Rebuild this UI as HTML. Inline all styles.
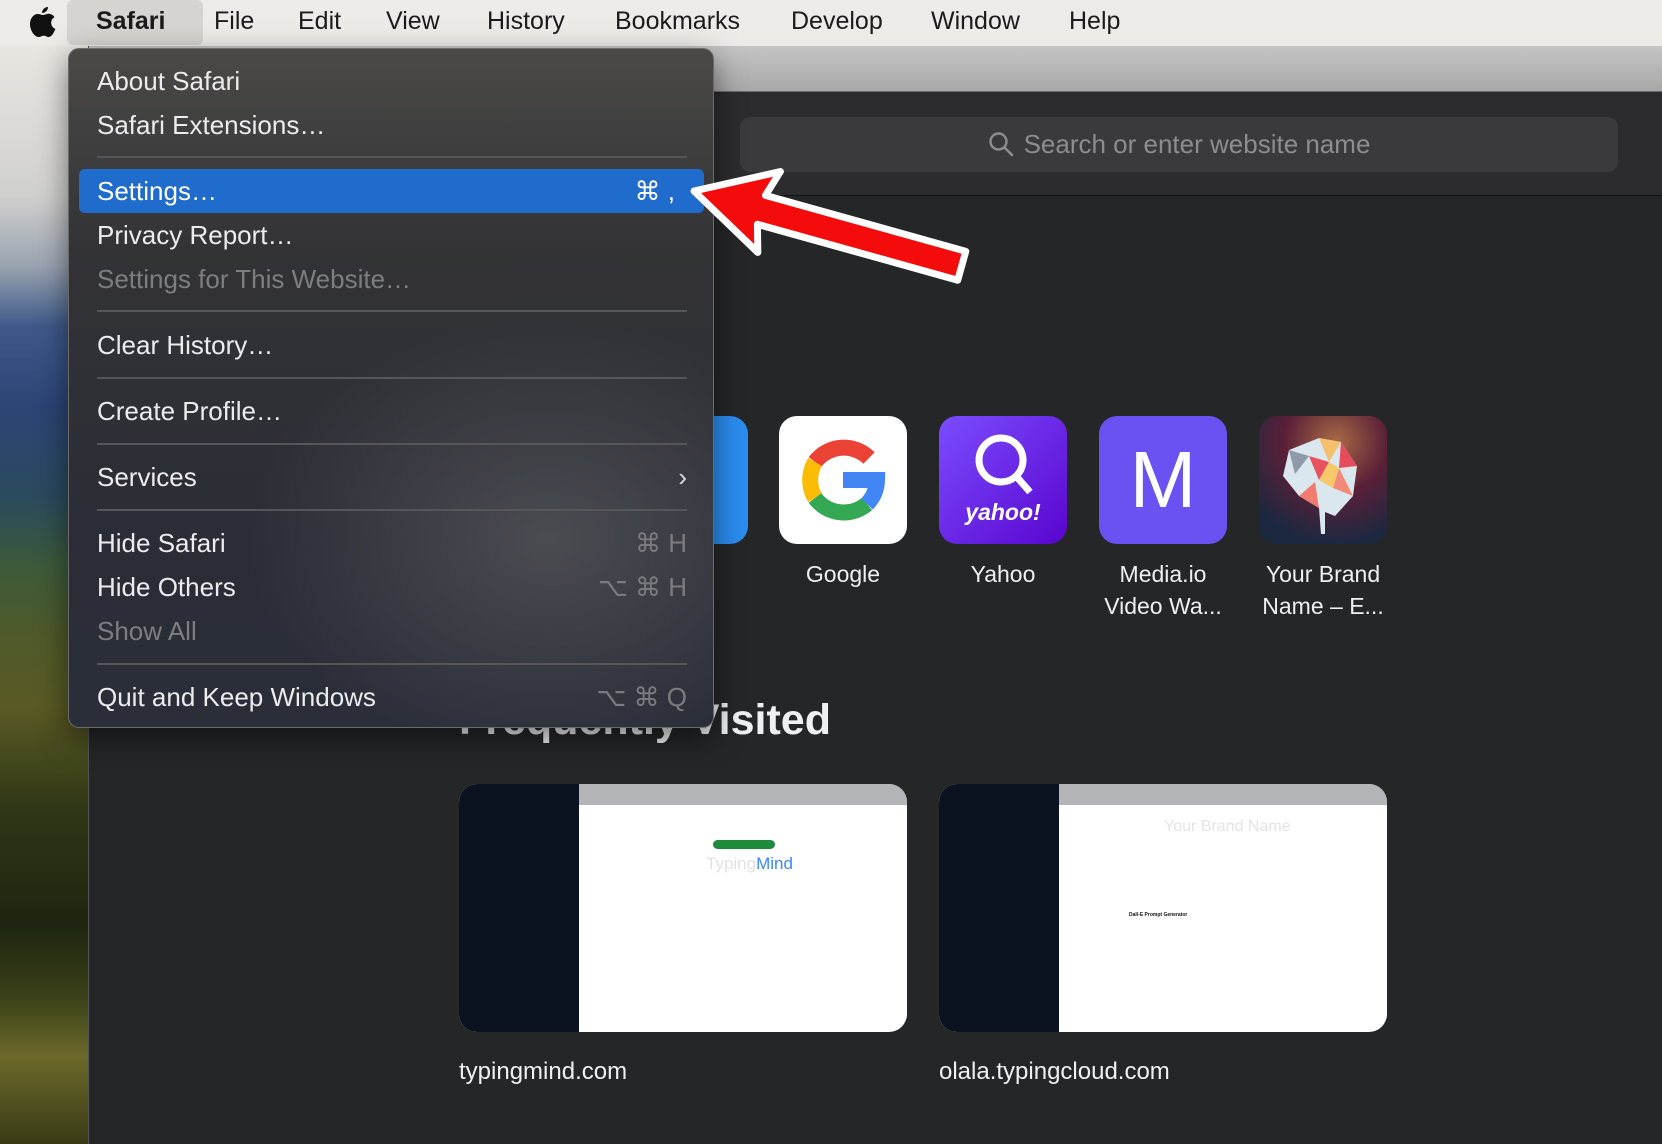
<!DOCTYPE html>
<html><head><meta charset="utf-8">
<style>
*{margin:0;padding:0;box-sizing:border-box}
body{width:1662px;height:1144px;overflow:hidden;position:relative;font-family:"Liberation Sans",sans-serif;background:#252628}
.desk{position:absolute;left:0;top:46px;width:90px;height:1098px;background:linear-gradient(180deg,#e8e6e0 0,#d0d0ce 150px,#9aa3b0 220px,#3f5a8a 280px,#2b4575 360px,#2a4a5e 450px,#3d5a3a 520px,#4f5a2a 590px,#5a5a24 660px,#2e3516 770px,#1e2510 880px,#3a4018 950px,#6b6a2a 1010px,#3a3a16 1098px)}
.win{position:absolute;left:88px;top:46px;right:0;bottom:0;background:#252628;border-left:1px solid #555}
.tbar{position:absolute;left:0;right:0;top:0;height:150px;background:linear-gradient(180deg,#c4c4c4 0,#a8a8a8 45px,#2c2c2e 46px,#2c2c2e 149px);border-bottom:1px solid #111}
.search{position:absolute;left:651px;top:71px;width:878px;height:55px;background:#3a3a3c;border-radius:10px;color:#8d8d90;font-size:26px;line-height:55px;text-align:center}
.menubar{position:absolute;left:0;top:0;width:1662px;height:46px;background:#ecebe8;font-size:25px;color:#1b1b1b}
.menubar span{position:absolute;top:7px}
.hl{position:absolute;left:67px;top:0;width:136px;height:45px;background:#d5d4d1;border-radius:6px}
.menu{position:absolute;left:68px;top:48px;width:646px;height:680px;border-radius:11px;background:radial-gradient(ellipse 300px 220px at 480px 490px,#4a4c52 0,rgba(60,62,68,0) 100%),linear-gradient(180deg,#4a4947 0,#333336 200px,#2a2d36 500px,#2a2e38 680px);border:1px solid #6b6b6b;box-shadow:0 10px 30px rgba(0,0,0,.5);color:#ececee;font-size:26px}
.it{position:absolute;left:28px;width:590px;height:44px;line-height:44px}
.it .k{position:absolute;right:0;top:0;color:#7b7c80}
.dim{color:#7d7e82}
.sep{position:absolute;left:28px;width:590px;height:2px;background:#55565a}
.sel{position:absolute;left:10px;top:120px;width:625px;height:44px;background:#1f6ccc;border-radius:6px}
.tile{position:absolute;top:416px;width:128px;height:128px;border-radius:18px}
.lbl{position:absolute;top:558px;width:160px;text-align:center;color:#f0f0f0;font-size:23px;line-height:32px}
.thumb{position:absolute;top:784px;width:448px;height:248px;border-radius:18px;overflow:hidden;background:#fff}
.side{position:absolute;left:0;top:0;width:120px;height:100%;background:#0b1320}
.hd{position:absolute;left:120px;right:0;top:0;height:21px;background:#b3b4b7}
.ul{position:absolute;top:1058px;color:#f0f0f0;font-size:24px}
</style></head><body>
<div class="desk"></div>
<div class="win">
 <div class="tbar"><div class="search"><svg width="26" height="26" viewBox="0 0 26 26" style="vertical-align:-4px;margin-right:10px"><circle cx="10.5" cy="10.5" r="8" fill="none" stroke="#8d8d90" stroke-width="2.4"/><line x1="16.5" y1="16.5" x2="24" y2="24" stroke="#8d8d90" stroke-width="2.6" stroke-linecap="round"/></svg>Search or enter website name</div></div>
</div>
<div class="tile" style="left:620px;background:#2a8df0"></div>
<div class="tile" style="left:779px;background:#fff"><svg width="128" height="128" viewBox="0 0 128 128"><g fill="none" stroke-width="16"><path d="M90 42 A36 36 0 0 0 36 46" stroke="#ea4335"/><path d="M36 46 A36 36 0 0 0 36 82" stroke="#fbbc05"/><path d="M36 82 A36 36 0 0 0 88 88" stroke="#34a853"/><path d="M88 88 A36 36 0 0 0 98 64 L64 64" stroke="#4285f4"/></g></svg></div>
<div class="tile" style="left:939px;background:linear-gradient(135deg,#7b4dff,#5a05cf)"><svg width="128" height="128" viewBox="0 0 128 128"><circle cx="62" cy="44" r="22" fill="none" stroke="#fff" stroke-width="7"/><line x1="77" y1="60" x2="91" y2="76" stroke="#fff" stroke-width="7"/><text x="64" y="104" text-anchor="middle" fill="#fff" font-size="23" font-weight="bold" font-family="Liberation Sans" font-style="italic">yahoo!</text></svg></div>
<div class="tile" style="left:1099px;background:#6a52f2;color:#fff;font-size:80px;text-align:center;line-height:128px">M</div>
<div class="tile" style="left:1259px;background:radial-gradient(circle at 60% 20%,#a86a45,#5a2038 40%,#1c2840 80%)"><svg width="128" height="128" viewBox="0 0 128 128"><path d="M60 22 L82 26 L98 50 L94 80 L76 100 L66 96 L66 118 L62 118 L60 92 L40 80 L24 60 L30 34 Z" fill="#dbe7ee"/><path d="M60 22 L82 26 L70 46 Z" fill="#f5c06e"/><path d="M82 26 L98 50 L80 52 Z" fill="#e74c5b"/><path d="M30 34 L50 40 L36 58 Z" fill="#8e9aa8"/><path d="M50 40 L70 46 L60 64 Z" fill="#e8525e"/><path d="M80 52 L94 80 L74 72 Z" fill="#f28a7a"/><path d="M40 80 L56 66 L60 92 Z" fill="#f07b6f"/><path d="M70 46 L80 52 L74 72 L60 64Z" fill="#f7c86a"/></svg></div>
<div class="lbl" style="left:763px">Google</div>
<div class="lbl" style="left:923px">Yahoo</div>
<div class="lbl" style="left:1083px">Media.io<br>Video Wa...</div>
<div class="lbl" style="left:1243px">Your Brand<br>Name – E...</div>
<div style="position:absolute;left:459px;top:696px;color:#f0f0f0;font-size:43px;font-weight:bold">Frequently Visited</div>
<div class="thumb" style="left:459px"><div class="side"></div><div class="hd"></div>
 <div style="position:absolute;left:254px;top:56px;width:62px;height:9px;background:#1e8a3c;border-radius:5px"></div>
 <div style="position:absolute;left:247px;top:70px;font-size:17px;color:#e3e3e6">Typing<span style="color:#3a86ff">Mind</span></div></div>
<div class="thumb" style="left:939px"><div class="side"></div><div class="hd"></div>
 <div style="position:absolute;left:225px;top:34px;font-size:16px;color:#e4e4e6">Your Brand Name</div>
 <div style="position:absolute;left:190px;top:128px;font-size:5px;font-weight:bold;color:#111">Dall-E Prompt Generator</div></div>
<div class="ul" style="left:459px">typingmind.com</div>
<div class="ul" style="left:939px">olala.typingcloud.com</div>
<div class="menubar"><div class="hl"></div>
 <svg style="position:absolute;left:29px;top:7px" width="28" height="32" viewBox="0 0 28 32"><path d="M19 0c0 3-2.5 6-6 6 0-3 2.6-6 6-6zM14 8c2 0 3.5-1.2 5.5-1.2 1.4 0 4.3.6 6 3.3-5 2.8-4 10 .9 11.7-1.2 3.6-3.7 8.2-6.6 8.2-2 0-2.6-1.3-5-1.3s-3.2 1.3-5 1.3C5.5 30 1 23.5 1 17 1 10.6 5.2 7 8.8 7 11 7 12.3 8 14 8z" fill="#111"/></svg>
 <span style="left:96px;font-weight:bold">Safari</span><span style="left:214px">File</span><span style="left:298px">Edit</span><span style="left:386px">View</span><span style="left:487px">History</span><span style="left:615px">Bookmarks</span><span style="left:791px">Develop</span><span style="left:931px">Window</span><span style="left:1069px">Help</span></div>
<div class="menu">
 <div class="it" style="top:10px">About Safari</div>
 <div class="it" style="top:54px">Safari Extensions…</div>
 <div class="sep" style="top:107px"></div>
 <div class="sel"></div>
 <div class="it" style="top:120px;color:#fff">Settings…<span class="k" style="color:#fff;right:12px">⌘ ,</span></div>
 <div class="it" style="top:164px">Privacy Report…</div>
 <div class="it dim" style="top:208px">Settings for This Website…</div>
 <div class="sep" style="top:261px"></div>
 <div class="it" style="top:274px">Clear History…</div>
 <div class="sep" style="top:328px"></div>
 <div class="it" style="top:340px">Create Profile…</div>
 <div class="sep" style="top:394px"></div>
 <div class="it" style="top:406px">Services<span class="k" style="color:#ddd">›</span></div>
 <div class="sep" style="top:460px"></div>
 <div class="it" style="top:472px">Hide Safari<span class="k">⌘ H</span></div>
 <div class="it" style="top:516px">Hide Others<span class="k">⌥ ⌘ H</span></div>
 <div class="it dim" style="top:560px">Show All</div>
 <div class="sep" style="top:614px"></div>
 <div class="it" style="top:626px">Quit and Keep Windows<span class="k">⌥ ⌘ Q</span></div>
</div>
<svg style="position:absolute;left:0;top:0" width="1662" height="400"><g transform="translate(694,191) rotate(15.6)"><path d="M0 0 L78 -42 L70 -15 L278 -15 L278 15 L70 15 L78 42 Z" fill="#f40c0c" stroke="#fff" stroke-width="7" stroke-linejoin="round"/></g></svg>
</body></html>
